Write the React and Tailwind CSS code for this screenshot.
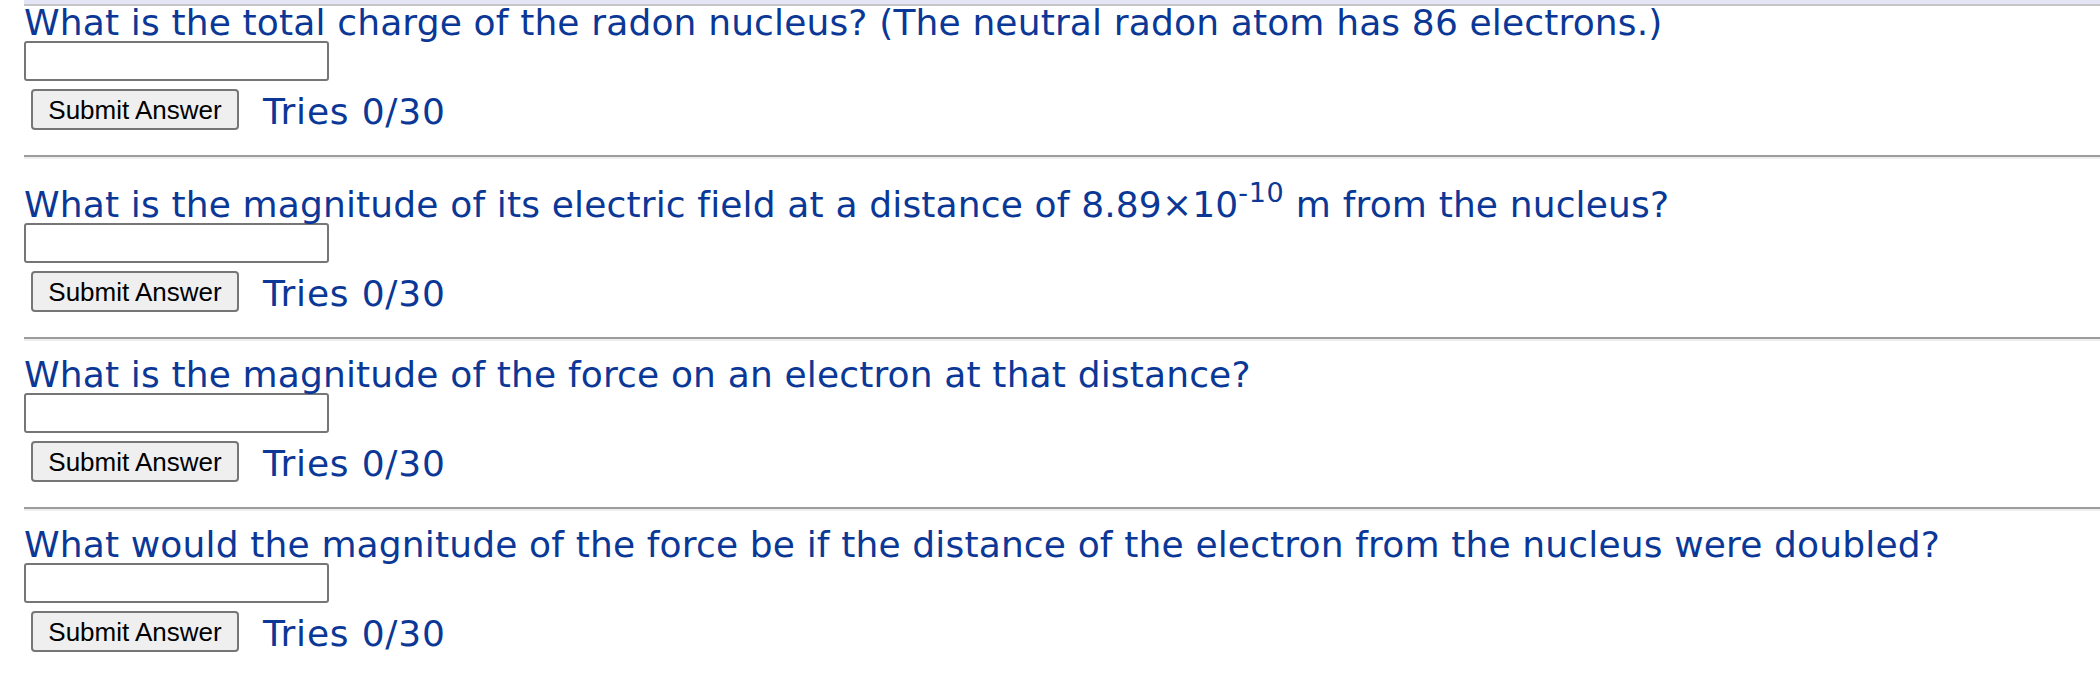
import { useState } from 'react';

const questions = [
  {
    id: 1,
    text: 'What is the total charge of the radon nucleus? (The neutral radon atom has 86 electrons.)',
  },
  {
    id: 2,
    text: (
      <>
        What is the magnitude of its electric field at a distance of 8.89×10
        <span className="text-[27px] align-[15px] tracking-[0.6px]">-10</span> m from the nucleus?
      </>
    ),
  },
  {
    id: 3,
    text: 'What is the magnitude of the force on an electron at that distance?',
  },
  {
    id: 4,
    text: 'What would the magnitude of the force be if the distance of the electron from the nucleus were doubled?',
  },
];

function Question({ q, first, last }) {
  const [value, setValue] = useState('');

  return (
    <div className={first ? '-mt-px' : 'mt-[16px]'}>
      {/* Question text */}
      <p className="text-[36px] leading-[36px] tracking-[0.15px] text-[#0b3896] font-['DejaVu_Sans',Verdana,sans-serif] whitespace-nowrap">
        {q.text}
      </p>

      {/* Answer box */}
      <input
        type="text"
        value={value}
        onChange={(e) => setValue(e.target.value)}
        className="block w-[305px] h-[40px] bg-white border-2 border-[#767676] rounded-[3px] px-1 text-[26px] font-['Liberation_Sans',Arial,sans-serif] outline-none"
      />

      {/* Submit + tries */}
      <div className="flex items-end mt-[8px] ml-[7px]">
        <button
          type="button"
          className="w-[208px] h-[41px] bg-[#efefef] border-2 border-[#767676] rounded-[4px] text-[26px] text-black font-['Liberation_Sans',Arial,sans-serif] leading-none flex items-center justify-center"
        >
          Submit Answer
        </button>
        <span className="ml-[24px] text-[36px] leading-[36px] tracking-[0.8px] text-[#0b3896] font-['DejaVu_Sans',Verdana,sans-serif]">
          Tries 0/30
        </span>
      </div>

      {!last && (
        <div className="mt-[25px] h-[4px] border-t-2 border-b-2 border-t-[#9c9c9c] border-b-[#eeeeee]" />
      )}
    </div>
  );
}

export default function App() {
  return (
    <div className="w-[2100px] h-[674px] bg-white overflow-hidden">
      <div className="ml-[24px]">
        {/* Bottom edge of the previous block */}
        <div className="h-[4px] bg-[#e5e5f8]" />
        <div className="h-[2px] bg-[#c6c6c6]" />

        {questions.map((q, i) => (
          <Question key={q.id} q={q} first={i === 0} last={i === questions.length - 1} />
        ))}
      </div>
    </div>
  );
}
